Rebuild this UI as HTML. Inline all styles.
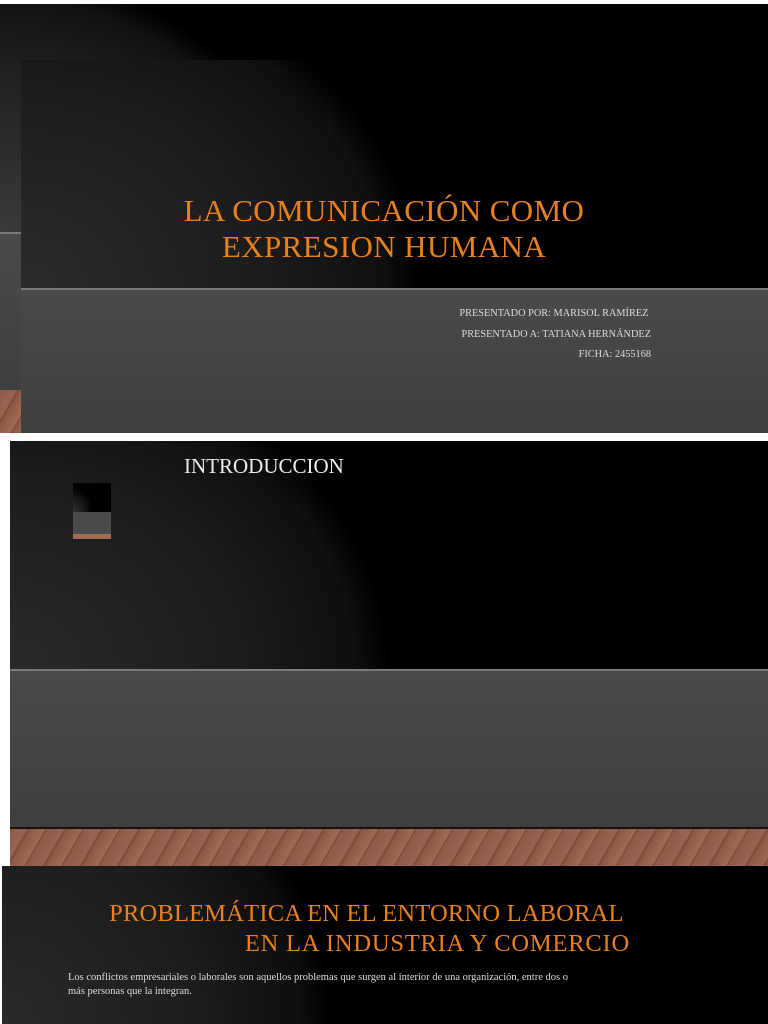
<!DOCTYPE html>
<html><head><meta charset="utf-8"><style>
*{margin:0;padding:0;box-sizing:border-box}
html,body{width:768px;height:1024px;overflow:hidden}
body{background:#fff;position:relative;font-family:"Liberation Serif",serif}
.abs{position:absolute}
.gray{background:linear-gradient(#4a4a4a,#3f3f3f);border-top:2px solid #7a7a7a}
.wood{background:repeating-linear-gradient(120deg,#8c5a45 0px,#9a6550 14px,#7a4a38 16px,#8c5a45 18px,#a06a52 30px,#6e4232 32px);}
.org{color:#e8801e}
</style></head><body>
<!-- slide 1 -->
<div class="abs" style="left:0;top:4px;width:768px;height:429px;background:#000;overflow:hidden">
  <div class="abs" style="left:0;top:0;width:768px;height:229px;background:radial-gradient(ellipse 300px 260px at 0% 100%, #3a3a3a 0%, #222 60%, #111 90%, #000 100%)"></div>
  <div class="abs gray" style="left:0;top:228px;width:768px;height:158px"></div>
  <div class="abs wood" style="left:0;top:386px;width:768px;height:43px"></div>
  <div class="abs" style="left:21px;top:56px;width:747px;height:373px;background:#000;overflow:hidden">
    <div class="abs" style="left:0;top:0;width:747px;height:228px;background:radial-gradient(ellipse 400px 330px at 0% 100%, #2c2c2c 0%, #1c1c1c 60%, #101010 90%, #000 100%)"></div>
    <div class="abs gray" style="left:0;top:228px;width:747px;height:145px"></div>
    <div class="abs org" style="left:0;top:133px;width:726px;text-align:center;font-size:31px;line-height:36px;letter-spacing:0.4px">LA COMUNICACIÓN COMO<br>EXPRESION HUMANA</div>
    <div class="abs" style="right:117px;top:244px;text-align:right;color:#ddd;font-size:10.3px;line-height:20.5px;">PRESENTADO POR: MARISOL RAMÍREZ&nbsp;<br>PRESENTADO A: TATIANA HERNÁNDEZ<br>FICHA: 2455168</div>
  </div>
</div>
<!-- slide 2 -->
<div class="abs" style="left:10px;top:441px;width:758px;height:425px;background:#000;overflow:hidden">
  <div class="abs" style="left:0;top:0;width:758px;height:228px;background:radial-gradient(ellipse 380px 320px at 0% 100%, #2a2a2a 0%, #1c1c1c 60%, #0f0f0f 90%, #000 100%)"></div>
  <div class="abs gray" style="left:0;top:228px;width:758px;height:159px"></div>
  <div class="abs" style="left:0;top:386px;width:758px;height:2px;background:#1a1210"></div>
  <div class="abs wood" style="left:0;top:388px;width:758px;height:37px"></div>
  <div class="abs" style="left:63px;top:42px;width:38px;height:56px;background:#000">
    <div class="abs" style="left:0;top:0;width:38px;height:29px;background:radial-gradient(ellipse 20px 25px at 0% 100%,#333,#000)"></div>
    <div class="abs" style="left:0;top:29px;width:38px;height:22px;background:#4a4a4a"></div>
    <div class="abs" style="left:0;top:51px;width:38px;height:5px;background:#a26a50"></div>
  </div>
  <div class="abs" style="left:174px;top:13px;color:#eee;font-size:21px">INTRODUCCION</div>
</div>
<!-- slide 3 -->
<div class="abs" style="left:2px;top:866px;width:766px;height:158px;background:#000;overflow:hidden">
  <div class="abs" style="left:0;top:0;width:766px;height:158px;background:radial-gradient(ellipse 330px 320px at 0% 100%, #2a2a2a 0%, #1c1c1c 60%, #0e0e0e 90%, #000 100%)"></div>
  <div class="abs org" style="left:0;top:33px;width:628px;text-align:right;font-size:24.5px;line-height:30px;white-space:nowrap;letter-spacing:0.2px">PROBLEMÁTICA EN EL ENTORNO LABORAL&nbsp;<br><span style="letter-spacing:0.8px">EN LA INDUSTRIA Y COMERCIO</span></div>
  <div class="abs" style="left:66px;top:105px;width:620px;color:#ddd;font-size:10.5px;line-height:14px">Los conflictos empresariales o laborales son aquellos problemas que surgen al interior de una organización, entre dos o<br>más personas que la integran.</div>
</div>
</body></html>
